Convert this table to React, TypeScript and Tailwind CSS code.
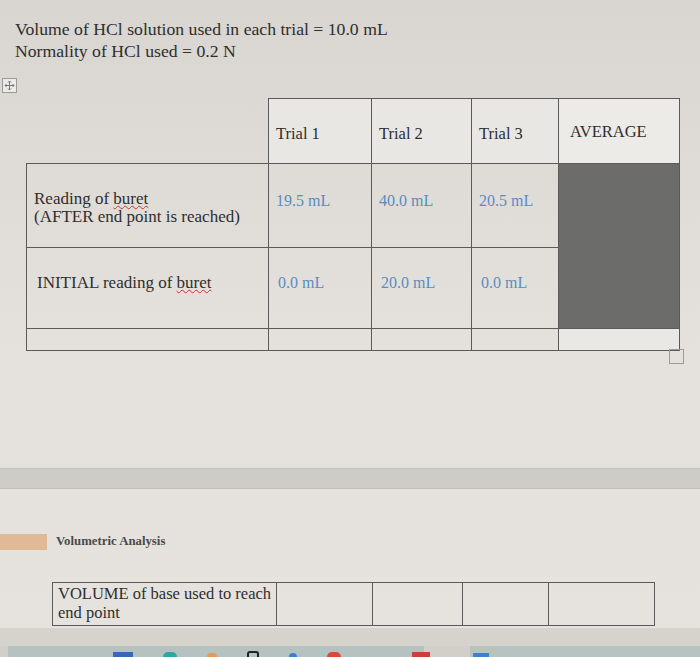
import React from 'react';

const serif = { fontFamily: '"Liberation Serif", "DejaVu Serif", serif' };

const trials = [
  { label: 'Trial 1', after: '19.5 mL', initial: '0.0 mL' },
  { label: 'Trial 2', after: '40.0 mL', initial: '20.0 mL' },
  { label: 'Trial 3', after: '20.5 mL', initial: '0.0 mL' },
];

function MoveHandle() {
  return (
    <div className="w-[15px] h-[15px] border border-[#9a9a9a] bg-[#ecebe8] flex items-center justify-center">
      <svg width="11" height="11" viewBox="0 0 11 11" fill="none" stroke="#777" strokeWidth="1">
        <path d="M5.5 1v9M1 5.5h9" />
        <path d="M4 2.5l1.5-1.5 1.5 1.5M4 8.5l1.5 1.5 1.5-1.5M2.5 4L1 5.5l1.5 1.5M8.5 4L10 5.5 8.5 7" />
      </svg>
    </div>
  );
}

const squiggle = 'underline decoration-wavy decoration-[#c0392b] decoration-1 underline-offset-[1px]';

export default function App() {
  return (
    <div
      className="w-[700px] h-[657px] overflow-hidden flex flex-col bg-linear-to-b from-[#d9d5d0] via-[#e4e1dc] to-[#e6e3de] text-[#2e2e2e]"
      style={serif}
    >
      {/* heading lines */}
      <div className="pt-[18px] pl-[15px] text-[17.7px] leading-[22px]">
        <p>Volume of HCl solution used in each trial = 10.0 mL</p>
        <p>Normality of HCl used = 0.2 N</p>
      </div>

      <div className="pl-[2px] pt-[16px]">
        <MoveHandle />
      </div>

      {/* readings table */}
      <div className="pl-[26px] mt-[5px] flex items-end">
        <table className="border-collapse text-[16.5px] leading-[19px]">
          <tbody>
            <tr className="h-[65px]">
              <td className="w-[242px] p-0" />
              {trials.map((t) => (
                <td key={t.label} className="border border-[#5a5a5a] align-top pt-[25px] pl-[7px] bg-[#e9e7e3]">
                  {t.label}
                </td>
              ))}
              <td className="border border-[#5a5a5a] align-top pt-[23px] pl-[11px] w-[121px] bg-[#ecebe8]">AVERAGE</td>
            </tr>
            <tr className="h-[84px]">
              <td className="border border-[#5a5a5a] align-top pt-[26px] pl-[7px] text-[17px] leading-[18px]">
                Reading of <span className={squiggle}>buret</span>
                <br />
                (AFTER end point is reached)
              </td>
              {trials.map((t, i) => (
                <td
                  key={t.label}
                  className={`border border-[#5a5a5a] align-top pt-[27px] pl-[7px] text-[16px] text-[#5b8cc0] ${
                    i === 0 ? 'w-[103px]' : i === 1 ? 'w-[100px]' : 'w-[87px]'
                  }`}
                >
                  {t.after}
                </td>
              ))}
              <td rowSpan={2} className="border border-[#5a5a5a] bg-[#6c6c6b]" />
            </tr>
            <tr className="h-[81px]">
              <td className="border border-[#5a5a5a] align-top pt-[25px] pl-[10px] text-[17px]">
                INITIAL reading of <span className={squiggle}>buret</span>
              </td>
              {trials.map((t) => (
                <td key={t.label} className="border border-[#5a5a5a] align-top pt-[25px] pl-[9px] text-[16px] text-[#5b8cc0]">
                  {t.initial}
                </td>
              ))}
            </tr>
            <tr className="h-[22px]">
              <td className="border border-[#5a5a5a]" />
              <td className="border border-[#5a5a5a]" />
              <td className="border border-[#5a5a5a]" />
              <td className="border border-[#5a5a5a]" />
              <td className="border border-[#5a5a5a] bg-[#eae8e5]" />
            </tr>
          </tbody>
        </table>
        <div className="w-[15px] h-[15px] border border-[#9c9c9c] -ml-[11px] -mb-[13px]" />
      </div>

      {/* page break band */}
      <div className="mt-[117px] h-[21px] bg-[#ceccc6] border-y border-[#c3c1bb]" />

      {/* next page heading */}
      <div className="mt-[43px] flex items-center gap-[9px]">
        <div className="w-[47px] h-[16px] bg-[#e0b996]" />
        <span className="text-[12.8px] font-bold text-[#4a4a4a]">Volumetric Analysis</span>
      </div>

      <div className="pl-[52px] mt-[31px]">
        <table className="border-collapse text-[16.5px] leading-[19px]">
          <tbody>
            <tr className="h-[43px]">
              <td className="w-[224px] border border-[#5a5a5a] align-top pl-[5px] pt-[1px]">
                VOLUME of base used to reach
                <br />
                end point
              </td>
              <td className="w-[96px] border border-[#5a5a5a]" />
              <td className="w-[90px] border border-[#5a5a5a]" />
              <td className="w-[86px] border border-[#5a5a5a]" />
              <td className="w-[106px] border border-[#5a5a5a]" />
            </tr>
          </tbody>
        </table>
      </div>

      {/* bottom strip and taskbar */}
      <div className="mt-[2px] h-[18px] bg-[#d6d3cd]" />
      <div className="flex-1 flex bg-[#d2cfca]">
        <div className="ml-[8px] w-[416px] bg-[#b6c2bf] flex items-end gap-[30px] pl-[105px]">
          <div className="w-[20px] h-[5px] bg-[#3866b8]" />
          <div className="w-[14px] h-[5px] rounded-t-full bg-[#2fa6a0]" />
          <div className="w-[10px] h-[4px] rounded-t-full bg-[#e29a55]" />
          <div className="w-[12px] h-[6px] rounded-t-[3px] border-2 border-b-0 border-[#222]" />
          <div className="w-[8px] h-[4px] rounded-t-full bg-[#3b7fd4]" />
          <div className="w-[14px] h-[5px] rounded-t-full bg-[#d64a3c]" />
        </div>
        <div className="w-[46px] flex items-end">
          <div className="w-[18px] h-[5px] bg-[#d03c3c] -ml-[12px]" />
        </div>
        <div className="flex-1 bg-[#b7c3c0] flex items-end pl-[3px]">
          <div className="w-[16px] h-[4px] bg-[#3f7fcf]" />
        </div>
      </div>
    </div>
  );
}
